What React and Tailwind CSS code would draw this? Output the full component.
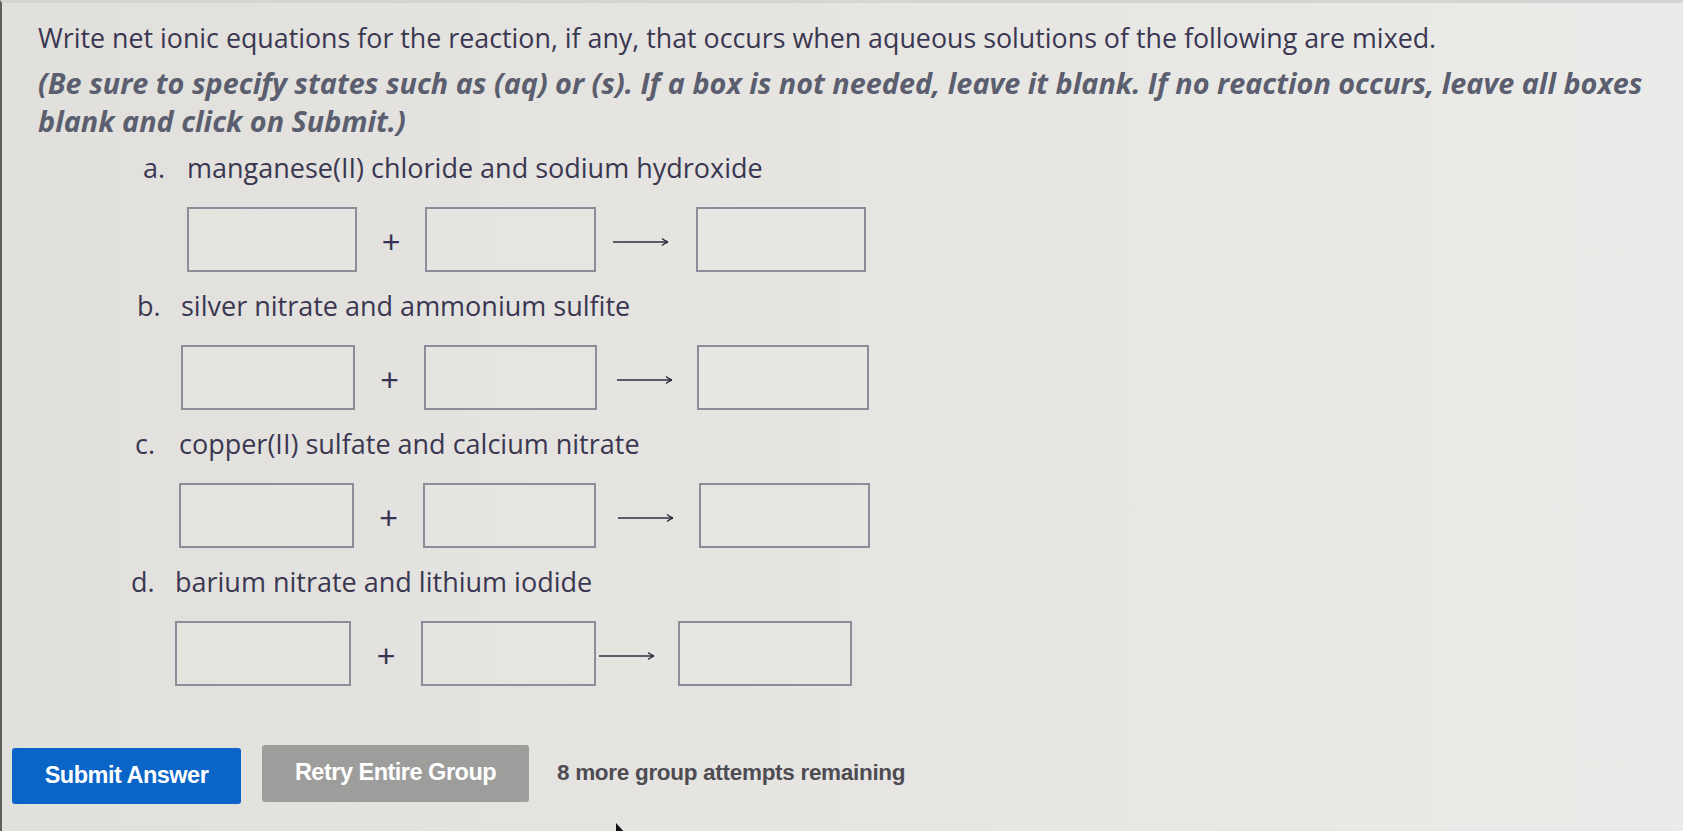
import React from "react";

const Box = ({ w }) => (
  <div className={`${w} h-[65px] border-2 border-[#8e8b9a] bg-[#e9e8e4]/40`} />
);

const Plus = ({ w }) => (
  <div
    className={`${w} flex justify-center pt-[4px] text-[32px] leading-none text-[#3a3454]`}
    style={{ fontFamily: '"Liberation Sans", sans-serif' }}
  >
    +
  </div>
);

const Arrow = () => (
  <svg width="56" height="12" viewBox="0 0 56 12" className="block">
    <path d="M0 6H54" stroke="#2f2c3d" strokeWidth="1.5" />
    <path d="M49 2.5 Q52 5 55 6" fill="none" stroke="#2f2c3d" strokeWidth="1.4" />
    <path d="M49 9.5 Q52 7 55 6" fill="none" stroke="#2f2c3d" strokeWidth="1.4" />
  </svg>
);

const items = [
  {
    m: "a.",
    t: "manganese(II) chloride and sodium hydroxide",
    pl: "pl-[185px]",
    b1: "w-[170px]",
    p: "w-[68px]",
    b2: "w-[171px]",
    a: "w-[100px] pl-[17px]",
    b3: "w-[170px]",
  },
  {
    m: "b.",
    t: "silver nitrate and ammonium sulfite",
    pl: "pl-[179px]",
    b1: "w-[174px]",
    p: "w-[69px]",
    b2: "w-[173px]",
    a: "w-[100px] pl-[20px]",
    b3: "w-[172px]",
  },
  {
    m: "c.",
    t: "copper(II) sulfate and calcium nitrate",
    pl: "pl-[177px]",
    b1: "w-[175px]",
    p: "w-[69px]",
    b2: "w-[173px]",
    a: "w-[103px] pl-[22px]",
    b3: "w-[171px]",
  },
  {
    m: "d.",
    t: "barium nitrate and lithium iodide",
    pl: "pl-[173px]",
    b1: "w-[176px]",
    p: "w-[70px]",
    b2: "w-[175px]",
    a: "w-[82px] pl-[3px]",
    b3: "w-[174px]",
  },
];

export default function App() {
  return (
    <div
      className="relative w-[1683px] h-[831px] overflow-hidden bg-linear-to-r from-[#e1e0dc] via-[#e6e5e2] to-[#ebebe9] border-l-2 border-l-[#5f5f5f] border-t-[3px] border-t-[#d4d4d2]"
      style={{ fontFamily: '"Open Sans", sans-serif' }}
    >
      <div className="pl-[36px] pt-[19px] text-[26.8px] leading-[32px] whitespace-nowrap text-[#3a3751]">
        Write net ionic equations for the reaction, if any, that occurs when aqueous solutions of the following are mixed.
      </div>
      <div className="pl-[36px] mt-[10px] text-[28.8px] leading-[38px] font-bold italic whitespace-nowrap text-[#5b5e6e]">
        (Be sure to specify states such as (aq) or (s). If a box is not needed, leave it blank. If no reaction occurs, leave all boxes
        <br />
        blank and click on Submit.)
      </div>

      <div className="mt-[11px] flex flex-col gap-[17px]">
        {items.map((it) => (
          <div key={it.m} className={it.pl}>
            <div className="flex text-[27px] leading-[34px] whitespace-nowrap text-[#3a3751]">
              <span className="-ml-[44px] w-[44px]">{it.m}</span>
              <span>{it.t}</span>
            </div>
            <div className="mt-[22px] flex items-center">
              <Box w={it.b1} />
              <Plus w={it.p} />
              <Box w={it.b2} />
              <div className={`${it.a} pt-[4px]`}>
                <Arrow />
              </div>
              <Box w={it.b3} />
            </div>
          </div>
        ))}
      </div>

      <div
        className="mt-[56px] pl-[10px] flex items-center"
        style={{ fontFamily: '"Liberation Sans", Arial, sans-serif' }}
      >
        <button className="w-[229px] h-[56px] mt-[6px] rounded-[3px] bg-[#0a65c6] text-white text-[23.5px] font-bold tracking-[-0.5px]">
          Submit Answer
        </button>
        <button className="ml-[21px] w-[267px] h-[57px] rounded-[3px] bg-[#9d9d9c] text-white text-[23.5px] font-bold tracking-[-0.5px]">
          Retry Entire Group
        </button>
        <span className="ml-[28px] text-[22.5px] font-bold tracking-[-0.3px] text-[#4e4c52]">
          8 more group attempts remaining
        </span>
      </div>

      <svg className="absolute left-[612px] top-[820px]" width="14" height="14" viewBox="0 0 14 14">
        <path d="M2 0 L12 11 L2 14 Z" fill="#111" />
      </svg>
    </div>
  );
}
